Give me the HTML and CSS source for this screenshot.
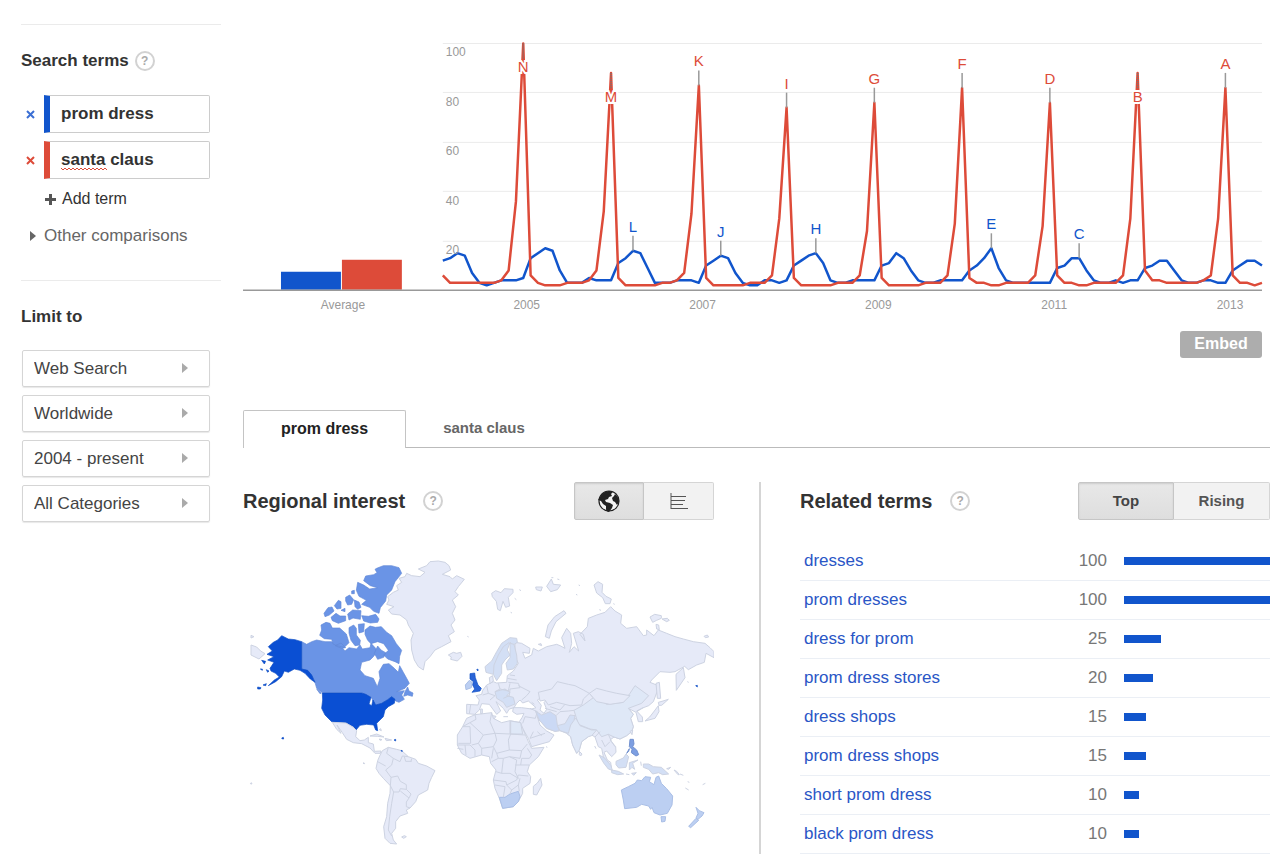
FILE: index.html
```html
<!DOCTYPE html>
<html lang="en">
<head>
<meta charset="UTF-8">
<meta name="viewport" content="width=device-width, initial-scale=1.0">
<title>Trends</title>
<link rel="stylesheet" href="styles.css">
</head>
<body>
<div class="page">

    <aside class="sidebar">
        <section class="block terms">
            <div class="block-title">
                <h2>Search terms</h2>
                <button class="help" aria-label="Help on search terms">?</button>
            </div>
            <div class="term blue">
                <button class="remove" aria-label="Remove prom dress"><svg width="9" height="9" viewBox="0 0 9 9"><path d="M1 1l7 7M8 1l-7 7"/></svg></button>
                <input type="text" value="prom dress" aria-label="Term 1">
            </div>
            <div class="term red">
                <button class="remove" aria-label="Remove santa claus"><svg width="9" height="9" viewBox="0 0 9 9"><path d="M1 1l7 7M8 1l-7 7"/></svg></button>
                <input type="text" value="santa claus" aria-label="Term 2" spellcheck="false">
                <svg class="squiggle" width="46" height="4" viewBox="0 0 46 4"><path d="M0 1l2 2 2-2 2 2 2-2 2 2 2-2 2 2 2-2 2 2 2-2 2 2 2-2 2 2 2-2 2 2 2-2 2 2 2-2 2 2 2-2 2 2 2-2 2 2"/></svg>
            </div>
            <button class="add"><svg width="11" height="11" viewBox="0 0 11 11"><path d="M5.5 0v11M0 5.5h11"/></svg>Add term</button>
            <button class="other"><svg width="6" height="10" viewBox="0 0 6 10"><path d="M0 0l6 5-6 5z"/></svg>Other comparisons</button>
        </section>

        <section class="block limits">
            <h2>Limit to</h2>
            <div class="filter">
                <select aria-label="Search type"><option>Web Search</option></select>
                <svg width="6" height="10" viewBox="0 0 6 10"><path d="M0 0l6 5-6 5z"/></svg>
            </div>
            <div class="filter">
                <select aria-label="Region"><option>Worldwide</option></select>
                <svg width="6" height="10" viewBox="0 0 6 10"><path d="M0 0l6 5-6 5z"/></svg>
            </div>
            <div class="filter">
                <select aria-label="Time range"><option>2004 - present</option></select>
                <svg width="6" height="10" viewBox="0 0 6 10"><path d="M0 0l6 5-6 5z"/></svg>
            </div>
            <div class="filter">
                <select aria-label="Category"><option>All Categories</option></select>
                <svg width="6" height="10" viewBox="0 0 6 10"><path d="M0 0l6 5-6 5z"/></svg>
            </div>
        </section>
    </aside>

    <main class="main">
        <div class="chart">
            <svg id="chart" viewBox="0 0 1020 290" role="img" aria-label="Interest over time"></svg>
            <button class="embed">Embed</button>
        </div>

        <div class="tabs" role="tablist">
            <button class="tab active" role="tab" aria-selected="true">prom dress</button>
            <button class="tab" role="tab" aria-selected="false">santa claus</button>
        </div>

        <div class="columns">
            <section class="region">
                <div class="head">
                    <h3>Regional interest</h3>
                    <button class="help" aria-label="Help on regional interest">?</button>
                    <div class="toggle icons">
                        <button class="on" aria-label="Map view">
                            <svg width="22" height="22" viewBox="0 0 22 22">
                                <circle cx="11" cy="11" r="10" fill="#f4f4f4" stroke="#222" stroke-width="1.2"/>
                                <path fill="#222" d="M2 7C4 3 8 1 12 1l3 1-2 2 1 2-3 1-1 2-3 1 1 2 4 1 3 2-1 3-3 4c-2 0-3-1-3-3l0-3-3-2-2-3-3-1zM17 4c3 2 4 5 4 8l-2 3-2-3-2-1-1-3 2-2z"/>
                            </svg>
                        </button>
                        <button aria-label="List view">
                            <svg width="18" height="16" viewBox="0 0 18 16"><path fill="none" stroke="#555" d="M1 0v16M1 3.5h15M1 7.5h14M1 11.5h12M1 15.500h17"/></svg>
                        </button>
                    </div>
                </div>

                <svg class="map" viewBox="-6 0 1413 915" role="img" aria-label="World map">
                    <!-- North America, Greenland -->
                    <g>
                        <path d="M425 178L432 165 428 155 445 142 460 135 455 122 470 112 462 100 480 95 485 85 500 92 525 95 540 82 520 72 545 62 555 50 580 48 600 52 612 62 617 75 592 88 615 95 622 102 635 92 658 103 640 125 630 140 640 150 622 165 632 185 622 205 630 225 618 240 628 260 610 272 618 290 590 305 570 315 555 335 540 350 535 375 520 365 508 345 500 315 498 285 505 265 490 240 485 225 465 210 440 207 430 195 447 185z"/>
                        <path d="M610 330l15-8 10 3 12-3 4 12-14 14-20-5 2-7z"/>
                        <path d="M18 300l17 6 12 12 13 8-18 16-24-12zM18 271l9 4-9 4z"/>
                        <g class="mid">
                            <path d="M170 290L185 298 200 290 215 285 240 290 260 290 272 300 290 306 300 318 312 308 335 312 345 300 352 312 375 308 378 295 392 310 396 320 385 335 375 345 350 352 345 375 360 392 385 400 397 425 405 400 402 380 415 358 432 356 448 370 460 382 464 362 475 382 485 400 493 415 480 430 455 440 478 437 470 450 478 463 462 472 452 468 440 455 430 463 410 475 392 480 385 470 378 455 362 449 350 443 232 443 215 430 208 405 190 378 170 372z"/>
                            <path d="M395 70l20-8 25 0 22 6 8 17-20 25-10 25-15 15-3 18-16 20-4 17-16-6-12-12-24-9 14-12-22-12-8-18 4-24 18 8 18 12 24-4-22-6-20-15 6-14 24-4 10-6-6-10z"/>
                            <path d="M350 212l20 2 22-6 10 14-4 10-22 2-20-6zM237 205l12-17 12-2 6 12-14 12-13 5zM258 217l15-12 12 8 17 0 0 14-22 8-18-8zM268 182l12-16 8 4 0 20-12 2zM302 157l12-7 12 14-6 14-12 2-6-12zM328 165l14 6 6 16-10 6-8-8zM308 207l15-12 25 2-2 26-22-4-12 6zM320 138l8-2 0 10-8 0zM288 196l12-6 0 10z"/>
                            <path d="M228 240l15-8 12 3 7 14 22 0 20 18 8 26-14 14-18-4-16-6-4-14-22-2-14-10 6-16zM312 248l14-8 8 10 0 20 12 16-2 14-14 2-12-16-6-22zM340 238l18-2-2 24-14 4zM270 302l18-8 14 14-12 2z"/>
                            <path d="M360 255l15-12 16 4 18-2 16 17 15 10 14 24 16 20-6 18-2 22-12-6-22-8-12-12 14-14-14-20-18-6-20 6-10-10-8-18zM388 325l10-22 10 12 14 8-6 14-18 6zM215 432l14 12-4 2zM480 440l8-14 4 12 12 6-2 10-14-4-12 4z"/>
                        </g>
                        <g class="us">
                            <path d="M110 272L130 282 150 284 170 290 170 372 188 376 200 390 210 412 196 402 180 385 165 376 148 372 130 382 118 378 110 395 92 410 70 422 88 405 103 396 92 385 78 378 75 370 87 352 68 345 87 335 66 328 82 318 70 305 85 292 98 285z"/>
                            <path d="M50 346l12 3-4 8zM38 426l10 2-2 4-8 0zM54 420l10-4-2 6zM46 372l6 0 0 4zM64 374l8 4-4 4z"/>
                        </g>
                    </g>

                    <!-- United States, Latin America -->
                    <g transform="translate(0 435)">
                        <path class="us" d="M232 9L350 9 362 13 378 22 372 42 380 47 384 30 392 45 410 40 428 29 440 20 450 28 448 40 430 50 420 60 415 80 405 90 395 100 398 122 392 120 386 105 365 103 345 106 333 120 325 110 303 99 285 98 260 95 240 75 230 55 233 30z"/>
                        <path d="M262 97L285 98 303 99 325 112 335 122 332 140 345 152 358 150 370 142 370 158 385 162 388 184 408 183 406 190 390 190 375 174 350 161 325 158 305 148 292 128 276 105 288 130 275 118z"/>
                        <path d="M375 138l20-6 22 9-20-2zM420 145l20 5-16 2zM403 147l8 2-6 2z"/>
                        <path d="M404 198L412 182 430 172 455 178 470 182 490 200 512 208 520 220 545 228 570 242 560 262 552 280 548 300 520 315 512 335 495 354 484 360 488 370 465 378 452 395 452 415 440 430 445 450 455 462 435 460 420 445 416 410 425 380 428 340 435 310 436 287 415 265 402 250 393 235 398 212z"/>
                        <path class="line" d="M430 172L425 190 445 205 440 225 422 240 438 262 436 287 446 306 440 340 434 380 430 420 440 438M445 205L465 215 472 198 490 200M478 200L482 214 500 214M500 206L498 214M398 215L422 228M438 262L458 258 466 274 484 284 484 298 466 296 462 306 446 306M484 298L498 312 492 324 466 303M492 324L484 336 484 350 495 354"/>
                        <path d="M470 441l8-4 6 3-8 5zM16 281l3-3 2 4zM354 220l3-2 2 3zM403 119l4-3 2 6z"/>
                        <path class="us" d="M110 144l5-2 1 5-4 0zM447 150l5-2 0 5zM468 181l4 1-1 3z"/>
                    </g>

                    <!-- Europe, Asia -->
                    <g transform="translate(615 60)">
                        <path d="M195 232L215 235 240 250 238 265 218 262 225 280 245 270 250 250 265 258 290 245 320 238 330 242 345 250 335 218 350 190 362 205 365 235 358 262 372 245 386 258 370 205 385 200 400 208 405 228 390 208 412 185 415 160 440 150 465 142 482 125 495 138 515 150 512 175 530 190 560 185 580 212 590 210 590 195 612 212 625 195 650 205 675 215 700 222 730 230 765 235 780 248 792 260 792 278 768 265 763 292 740 300 715 314 704 304 675 320 660 322 630 320 605 345 600 352 620 360 622 378 610 410 596 422 575 430 560 438 577 456 578 470 565 470 558 442 535 430 550 448 542 460 550 485 545 500 530 512 510 522 492 516 480 525 497 545 498 562 485 575 470 558 462 562 472 585 482 592 484 608 470 598 460 575 455 550 445 545 435 516 425 510 415 515 395 530 388 555 380 565 368 540 362 515 350 505 330 497 315 499 290 490 268 465 262 455 270 480 290 498 312 510 298 530 245 545 235 520 215 485 208 470 216 458 222 445 200 448 188 440 190 428 215 428 245 432 258 428 235 408 218 414 210 405 200 415 192 428 178 432 170 445 160 430 138 410 152 438 140 448 118 418 95 416 88 435 74 448 50 446 50 418 84 420 88 405 78 392 95 388 98 376 110 360 130 350 140 354 170 352 172 332 190 318 205 295 195 275z"/>
                        <path d="M262 405l16-10 14 6-10 12 8 20-8 12-12-10 4-14zM245 412l8 6" fill="#fff"/>
                        <path class="c1" d="M372 436L400 420 430 398 418 385 470 418 520 412 540 385 555 362 596 392 575 415 535 430 550 448 542 460 550 485 545 500 530 512 510 522 492 516 475 508 455 515 440 495 420 492 385 478z"/>
                        <path d="M418 385L440 370 470 378 500 385 540 392 520 412 480 418 440 410z"/>
                        <path d="M265 382L305 372 322 350 355 358 375 362 400 375 418 385 400 402 395 420 360 422 345 418 320 412 295 420 285 405 270 408z"/>
                        <path class="c1" d="M362 470L378 460 390 482 425 495 440 495 425 512 415 515 395 530 388 555 380 565 368 540 362 515 350 505z"/>
                        <path class="c3" d="M256 438L275 450 300 440 318 452 322 480 328 497 315 499 290 490 268 465z"/>
                        <path class="c2" d="M322 482L345 476 360 450 375 452 372 466 362 480 355 505 330 497z"/>
                        <path class="c2" d="M135 380l30-8 15 10-10 10 20 5 5 20-25 10-10-15-20-12z"/>
                        <path class="line" d="M318 452L330 440 355 438 372 436M285 430L320 440M300 425L330 435 345 418M110 362L115 385 98 390M115 385L135 392 120 405M145 355L150 372 175 378 180 355M172 340L200 345M180 330L195 332M175 352L205 355 210 368 180 372M205 362L240 380 230 392 215 405M180 372L178 392 160 400M150 372L135 380M240 430L262 440 256 460 225 455M225 455L218 475M250 500L240 520 285 505M262 500L275 512M480 530L465 545 455 525M475 508L485 530 495 545M560 440L580 428M435 516L450 500M62 420L58 446"/>
                        <path class="c2" d="M105 305L125 288 140 260 155 235 180 218 200 220 202 232 190 240 180 232 172 255 180 270 165 285 155 300 155 325 140 347 130 328 118 325 108 322z"/>
                        <path class="c2" d="M180 235L192 238 200 270 202 295 190 312 172 315 168 295 180 278z"/>
                        <path class="line" d="M130 328L132 300 145 270 160 245 178 232"/>
                        <path d="M118 338l10-6 2 16-10 8zM118 450l20 4-6 8zM92 432l5 0 0 14-5 0zM160 455l14 0"/>
                        <path class="c4" d="M46 360l12-14 8 6-2 16-16 6z"/>
                        <path class="uk" d="M60 326l14-2 2 14 8 22 10 10-4 8-24 4 8-10-6-12 2-10-10-8zM80 314l4-2 0 6zM737 362l5-1 0 5z"/>
                        <path d="M125 85l12-8 16 6 10-12 26 2 0 10-14 14 4 26-12 4-8-18-8 28-8-4-4-24-12-14zM194 100l5 4M208 74l5 3M182 142l4 2M257 66l20 0-4 12-14-4zM290 64l14-22 6 16 22 2-10 14-20 6zM304 38l6 0M322 42l6 2M378 88l4 2M386 60l4 2M432 60l12-10 14 8-2 24 12 12 16 8-4 14-14 0-8-18-18-14zM448 134l5 2M490 116l4 2M600 156l14-8 20 4 0 8-14 6-12 6zM636 162l16-2 6 6-8 4zM618 178l8 2 2 14-8-2zM762 214l10-4 4 6-10 2zM52 214l4 2"/>
                        <path d="M286 215l8-35 20-25 28-18 6 8-30 25-14 28-6 22zM265 238l8-2 2 6z"/>
                        <path d="M678 328l22-20 5 30-26 38zM618 355l10-3 4 48-10 0zM625 412l14-4 16-5-20 18-8 0zM625 422l2 18-12 20-30 8 14-12 14-18zM712 350l4 2"/>
                    </g>

                    <!-- Africa, Oceania -->
                    <g transform="translate(615 435)">
                        <path d="M50 85L75 74 125 68 130 85 155 98 180 92 212 98 218 115 235 155 245 175 282 172 265 200 238 225 232 245 242 260 240 280 218 295 218 310 205 335 190 350 158 355 148 325 135 295 130 270 138 240 122 220 118 200 95 195 60 205 35 190 22 165 22 135 38 110z"/>
                        <path class="c1" d="M182 93L212 98 218 132 182 132z"/>
                        <path class="c4" d="M148 322L165 322 180 312 205 304 210 320 205 335 190 350 158 355z"/>
                        <path class="line" d="M75 74L78 88 38 110M60 98L100 135 85 160 65 165M38 110L60 110 62 160 25 160M125 68L120 95 135 130 180 132 180 92M100 135L135 130M135 130L140 150 130 170 95 175 85 160M182 132L175 150 178 180 140 190 130 170M180 132L225 135M178 180L215 182 232 162M215 182L210 205 178 200M232 175L245 195 238 205 215 205M60 165L75 180 75 200M45 165L48 195M95 175L95 195M130 175L125 205M22 165L60 165M22 175L40 178M140 190L145 205 125 215M145 205L160 205 178 200 200 210 195 245 205 265 180 250 155 250 138 245M160 205L155 250M195 225L238 225M215 205L212 225M130 270L168 275 170 285 200 270 205 255 235 258M135 285L165 290 160 322M170 285L185 300 205 285 210 265M185 300L180 312M205 285L208 304"/>
                        <path d="M272 265l4 20-16 30-10-2 0-24 12-10z"/>
                        <path d="M388 184l8 8-4 6-4-4zM434 168l4 8M288 170l4 2"/>
                        <path class="c2" d="M447 195l16 8 20 24 4 14-12-4-14-18zM485 240l20 4 16 8-18 2-18-6zM498 214l22-10 8-12 8 8-8 32-22 2-8-10zM538 218l26-8-16 10 6 18-8-6-8 8zM580 222l16 0 14 8 24 2 22 20-18 2-12-6-18 4-12-14-16-6zM528 252l10 2M545 250l14-2-8 8zM572 215l2 12"/>
                        <path class="ph" d="M540 148l10 0 2 14-4 8 12 10 6 14-8 4-14-10 2-10-8-8zM538 176l-8 14 6-6z"/>
                        <path d="M540 124l8-4-2 14zM650 236l12-4-6 6zM672 240l8 4 8 10-4 0zM690 252l10 4M706 294l10 6M713 275l5 2M758 284l8-4"/>
                        <path class="c4" d="M514 300L535 290 555 280 562 270 575 272 585 260 602 262 598 275 612 284 618 262 626 258 634 280 650 296 668 318 666 345 652 370 630 375 612 368 606 352 602 358 596 348 575 343 560 352 524 356 520 330zM633 380l14 0-2 14-10 2zM738 352l10 10 14 6-6 10-12 10-6-4 6-14zM738 385l8 6-24 22-6-4z"/>
                    </g>
                </svg>
            </section>

            <section class="related">
                <div class="head">
                    <h3>Related terms</h3>
                    <button class="help" aria-label="Help on related terms">?</button>
                    <div class="toggle words">
                        <button class="on">Top</button>
                        <button>Rising</button>
                    </div>
                </div>
                <table class="rank">
                    <tr><td><a href="#">dresses</a></td><td class="num">100</td><td class="bar"><div style="width:100%"></div></td></tr>
                    <tr><td><a href="#">prom dresses</a></td><td class="num">100</td><td class="bar"><div style="width:100%"></div></td></tr>
                    <tr><td><a href="#">dress for prom</a></td><td class="num">25</td><td class="bar"><div style="width:25%"></div></td></tr>
                    <tr><td><a href="#">prom dress stores</a></td><td class="num">20</td><td class="bar"><div style="width:20%"></div></td></tr>
                    <tr><td><a href="#">dress shops</a></td><td class="num">15</td><td class="bar"><div style="width:15%"></div></td></tr>
                    <tr><td><a href="#">prom dress shops</a></td><td class="num">15</td><td class="bar"><div style="width:15%"></div></td></tr>
                    <tr><td><a href="#">short prom dress</a></td><td class="num">10</td><td class="bar"><div style="width:10%"></div></td></tr>
                    <tr><td><a href="#">black prom dress</a></td><td class="num">10</td><td class="bar"><div style="width:10%"></div></td></tr>
                </table>
            </section>
        </div>
    </main>
</div>

<script src="chart.js"></script>
</body>
</html>
```
FILE: styles.css
```css
* {
    box-sizing: border-box;
}
body {
    margin: 0;
    background: #fff;
    color: #333;
    font-family: "Liberation Sans", Arial, sans-serif;
    font-size: 17px;
    line-height: 20px;
}
button, input, select {
    font: inherit;
    color: inherit;
    margin: 0;
    padding: 0;
    border: 0;
    background: none;
}
button {
    cursor: pointer;
}
h2, h3 {
    margin: 0;
    font-size: 17px;
    font-weight: bold;
}
h3 {
    font-size: 20px;
}
.page {
    display: flex;
    gap: 22px;
    padding: 24px 17px 0 21px;
}

/* sidebar */
.sidebar {
    flex: 0 0 200px;
    min-width: 0;
}
.block {
    border-top: 1px solid #ebebeb;
    padding-right: 11px;
}
.terms {
    height: 256px;
    padding-top: 26px;
}
.limits {
    padding-top: 26px;
}
.limits h2 {
    margin-bottom: 23px;
}
.block-title {
    display: flex;
    align-items: center;
    gap: 6px;
    margin-bottom: 24px;
}
.help {
    flex: none;
    width: 20px;
    height: 20px;
    border: 2px solid #d2d2d2;
    border-radius: 50%;
    color: #aaa;
    font-size: 12px;
    font-weight: bold;
    line-height: 16px;
}
.term {
    position: relative;
    display: flex;
    align-items: center;
    margin-bottom: 8px;
}
.term input {
    flex: 1;
    min-width: 0;
    height: 38px;
    padding-left: 11px;
    border: 1px solid #ccc;
    border-left: 6px solid #1155cc;
    border-radius: 0 2px 2px 0;
    font-weight: bold;
}
.term.red input {
    border-left-color: #dd4b39;
}
.remove {
    width: 23px;
    padding-left: 5px;
    text-align: left;
    line-height: 10px;
}
.remove svg, .add svg, .squiggle {
    fill: none;
    stroke: #3b6fd4;
    stroke-width: 2;
}
.red .remove svg, .squiggle {
    stroke: #dd4b39;
}
.squiggle {
    position: absolute;
    left: 40px;
    top: 26px;
    stroke-width: 1;
}
.add {
    display: flex;
    align-items: center;
    gap: 6px;
    margin: 10px 0 17px 24px;
    font-size: 16px;
}
.add svg {
    stroke: #555;
    stroke-width: 3;
}
.other {
    display: flex;
    align-items: center;
    gap: 8px;
    padding-left: 9px;
    color: #666;
    white-space: nowrap;
}
.other svg {
    fill: #666;
}
.filter {
    position: relative;
    margin: 0 0 8px 1px;
}
.filter select {
    appearance: none;
    display: block;
    width: 100%;
    height: 37px;
    padding-left: 11px;
    border: 1px solid #d5d5d5;
    border-radius: 2px;
    box-shadow: 0 1px 1px #e8e8e8;
    color: #444;
}
.filter svg {
    position: absolute;
    right: 22px;
    top: 13px;
    fill: #aaa;
    pointer-events: none;
}

/* main */
.main {
    flex: 1;
    min-width: 0;
    padding-top: 6px;
}
.chart {
    padding-right: 8px;
}
.chart svg {
    display: block;
    width: 100%;
    overflow: visible;
}
.grid {
    stroke: #ebebeb;
}
.axis {
    stroke: #999;
    stroke-width: 1.5;
}
.tick {
    fill: #999;
    font-size: 12px;
}
.mid-tick {
    text-anchor: middle;
}
.series {
    fill: none;
    stroke-width: 2.5;
    stroke-linejoin: round;
}
.stem {
    stroke: #999;
    stroke-width: 1.5;
}
.stem.inner {
    stroke: #777;
    stroke-dasharray: 1 1;
}
.flag {
    font-size: 15px;
    text-anchor: middle;
    stroke: #fff;
    stroke-width: 4;
    paint-order: stroke;
}
.embed {
    display: block;
    width: 82px;
    height: 27px;
    margin: 11px 0 0 auto;
    border-radius: 3px;
    background: #adadad;
    color: #fff;
    font-size: 16px;
    font-weight: bold;
}
.tabs {
    display: flex;
    margin-top: 52px;
    border-bottom: 1px solid #bbb;
}
.tab {
    height: 37px;
    padding: 0 37px;
    color: #666;
    font-size: 15px;
    font-weight: bold;
}
.tab.active {
    height: 38px;
    margin-bottom: -1px;
    border: 1px solid #c4c4c4;
    border-bottom: 0;
    border-radius: 2px 2px 0 0;
    background: #fff;
    color: #222;
    font-size: 16px;
}
.columns {
    display: grid;
    grid-template-columns: 516fr 511fr;
    margin-top: 34px;
}
.region {
    padding-right: 45px;
}
.related {
    padding-left: 39px;
    border-left: 2px solid #d5d5d5;
}
.head {
    display: flex;
    align-items: center;
    gap: 18px;
    height: 38px;
}
.toggle {
    display: flex;
    height: 38px;
    margin-left: auto;
}
.toggle button {
    display: flex;
    align-items: center;
    justify-content: center;
    border: 1px solid #d5d5d5;
    border-left: 0;
    border-radius: 0 2px 2px 0;
    background: #f2f2f2;
    color: #555;
    font-size: 15px;
    font-weight: bold;
}
.toggle .on {
    border: 1px solid #c6c6c6;
    border-radius: 2px 0 0 2px;
    background: linear-gradient(#e8e8e8, #dedede);
    box-shadow: inset 0 1px 2px #ccc;
    color: #444;
}
.icons button {
    width: 70px;
}
.words button {
    width: 96px;
}

/* map */
.map {
    display: block;
    width: 100%;
    margin-top: 25px;
    fill: #e6eaf8;
    stroke: #cdd3e2;
    stroke-width: 3;
    stroke-linejoin: round;
}
.map .line {
    fill: none;
}
.map .c1 {
    fill: #dfe8f7;
}
.map .c2 {
    fill: #d3dff5;
}
.map .c3 {
    fill: #cbd9f5;
}
.map .c4 {
    fill: #bccff2;
    stroke: #aabfe6;
}
.map .mid {
    fill: #6a94e6;
    stroke: #6088d6;
    stroke-width: 2;
}
.map .ph {
    fill: #7d9fe2;
    stroke: #7291cf;
}
.map .us, .map .uk {
    fill: #0a4fd3;
    stroke: #0a4bc4;
    stroke-width: 2;
}
.map .uk {
    fill: #2a64d6;
}

/* related terms */
.rank {
    width: 100%;
    margin-top: 22px;
    border-collapse: collapse;
}
.rank td {
    height: 39px;
    padding: 0;
    border-bottom: 1px solid #ebeff5;
}
.rank td:first-child {
    padding-left: 4px;
}
.rank a {
    color: #2a56c6;
    text-decoration: none;
}
.rank .num {
    width: 60px;
    padding-right: 17px;
    color: #777;
    text-align: right;
}
.rank .bar {
    width: 146px;
}
.bar div {
    height: 8px;
    background: #1155cc;
}
```
FILE: chart.js
```js
// monthly values, January 2004 to May 2013
const prom = [
    12,13,15,14,7,3,2,3,4,4,4,5,
    13,15,17,16,8,3,3,3,5,4,4,4,
    11,13,16,15,9,3,3,3,4,4,4,3,
    10,12,14,13,7,3,2,2,4,4,3,4,
    10,12,14,15,11,4,3,3,4,4,4,4,
    10,11,15,13,8,4,3,3,4,4,4,4,
    8,10,13,17,9,4,3,3,3,3,3,3,
    9,10,13,13,8,4,3,3,4,3,4,4,
    9,10,12,12,8,4,3,3,4,4,3,3,
    8,10,12,12,10
];
const santa = [
    6,3,3,3,3,3,3,3,4,8,36,100,
    6,3,2,2,2,3,3,3,4,8,32,88,
    5,2,2,2,2,2,3,3,4,7,31,83,
    5,2,2,2,2,2,3,3,3,6,29,74,
    5,2,2,2,2,2,3,3,3,6,24,76,
    5,2,2,2,2,2,3,3,3,6,27,82,
    5,3,3,2,2,3,3,3,3,6,26,76,
    6,3,3,2,2,3,3,3,3,6,29,88,
    8,4,4,3,3,3,3,3,4,6,29,82,
    6,3,3,2,3
];
// letter, month index, series, drawn below the peak
const flags = [
    ['N', 11, 'r', true], ['M', 23, 'r', true], ['L', 26, 'b'], ['K', 35, 'r'],
    ['J', 38, 'b'], ['I', 47, 'r'], ['H', 51, 'b'], ['G', 59, 'r'],
    ['F', 71, 'r'], ['E', 75, 'b'], ['D', 83, 'r'], ['C', 87, 'b'],
    ['B', 95, 'r', true], ['A', 107, 'r']
];
const colors = { b: '#1155cc', r: '#dd4b39' };
const left = 200, right = 1020, base = 260.5;

function x(i) {
    return left + i * (right - left) / (prom.length - 1);
}
function y(v) {
    return base - v * 2.47;
}
function line(data, color) {
    const points = data.map((v, i) => x(i).toFixed(1) + ',' + y(v).toFixed(1)).join(' ');
    return `<polyline class="series" stroke="${color}" points="${points}"/>`;
}

let out = '';
for (let v = 20; v <= 100; v += 20) {
    const gy = Math.floor(y(v)) + 0.5;
    out += `<line class="grid" x1="${left}" x2="${right}" y1="${gy}" y2="${gy}"/>`;
}

// average bars
out += `<rect x="38" y="242" width="60" height="18" fill="${colors.b}"/>`;
out += `<rect x="99" y="230" width="60" height="30" fill="${colors.r}"/>`;
out += `<line class="axis" x1="0" x2="${right}" y1="${base}" y2="${base}"/>`;
out += line(prom, colors.b) + line(santa, colors.r);
for (let v = 20; v <= 100; v += 20) {
    out += `<text class="tick" x="203" y="${Math.round(y(v)) + 13}">${v}</text>`;
}
out += '<text class="tick mid-tick" x="100" y="279">Average</text>';
[2005, 2007, 2009, 2011, 2013].forEach((year, i) => {
    out += `<text class="tick mid-tick" x="${284 + i * 176}" y="279">${year}</text>`;
});

flags.forEach(([letter, i, s, below]) => {
    const py = y((s === 'r' ? santa : prom)[i]);
    const end = below ? py + 16 : py - 15;
    const ty = below ? py + 29 : py - 19;
    out += `<line class="stem${below ? ' inner' : ''}" x1="${x(i)}" x2="${x(i)}" y1="${py}" y2="${end}"/>`;
    out += `<text class="flag" fill="${colors[s]}" x="${x(i)}" y="${ty}">${letter}</text>`;
});
document.getElementById('chart').innerHTML = out;
```
